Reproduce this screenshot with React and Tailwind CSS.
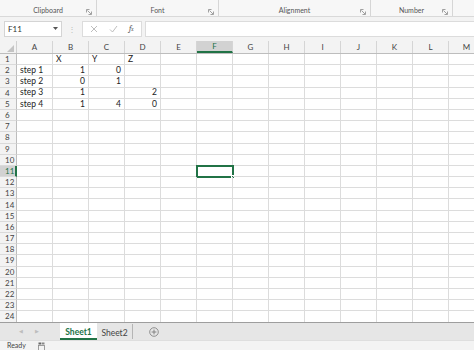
import React from 'react';

const cols = ['A', 'B', 'C', 'D', 'E', 'F', 'G', 'H', 'I', 'J', 'K', 'L', 'M'];

const data = {
    1: { B: ['X', 'l'], C: ['Y', 'l'], D: ['Z', 'l'] },
    2: { A: ['step 1', 'l'], B: ['1', 'r'], C: ['0', 'r'] },
    3: { A: ['step 2', 'l'], B: ['0', 'r'], C: ['1', 'r'] },
    4: { A: ['step 3', 'l'], B: ['1', 'r'], D: ['2', 'r'] },
    5: { A: ['step 4', 'l'], B: ['1', 'r'], C: ['4', 'r'], D: ['0', 'r'] },
};

const Launcher = () => (
    <svg width="6" height="6" viewBox="0 0 6 6" className="text-[#8a8a8a]">
        <path d="M0.5 0.5h3M0.5 0.5v3M1.5 1.5l3.5 3.5M2.5 5.5h3v-3" stroke="currentColor" strokeWidth="0.8" fill="none" />
    </svg>
);

const Group = ({ label, w }) => (
    <div className={`relative flex items-end justify-center pb-[2px] h-full border-r border-[#d6d6d6] ${w}`}>
        <span className="text-[7px] text-[#555] leading-none">{label}</span>
        <span className="absolute right-[4px] top-[9px]"><Launcher /></span>
    </div>
);

const App = () => {
    const rows = Array.from({ length: 24 }, (_, i) => i + 1);
    return (
        <div className="w-[474px] h-[350px] overflow-hidden bg-white flex flex-col" style={{ fontFamily: 'Lato, "Open Sans", sans-serif' }}>
            {/* ribbon group labels */}
            <div className="h-[17px] flex bg-[#f7f7f7] border-b border-[#d9d9d9] shrink-0">
                <Group label="Clipboard" w="w-[97px]" />
                <Group label="Font" w="w-[122px]" />
                <Group label="Alignment" w="w-[152px]" />
                <Group label="Number" w="w-[82px]" />
            </div>

            {/* formula bar */}
            <div className="h-[24px] flex items-center bg-[#f3f3f3] shrink-0 pl-[4px] pr-0">
                <div className="w-[58px] h-[16px] bg-white border border-[#d4d4d4] flex items-center justify-between px-[3px]">
                    <span className="text-[8px] text-[#333]">F11</span>
                    <svg width="5" height="4" viewBox="0 0 5 4"><path d="M0 0h5L2.5 3z" fill="#555" /></svg>
                </div>
                <div className="w-[20px] flex justify-center text-[8px] text-[#bbb] leading-none">⋮</div>
                <div className="w-[60px] h-[16px] bg-white border border-[#dcdcdc] flex items-center justify-around px-[2px]">
                    <svg width="8" height="8" viewBox="0 0 8 8"><path d="M1 1l6 6M7 1l-6 6" stroke="#b5b5b5" strokeWidth="0.9" /></svg>
                    <svg width="9" height="8" viewBox="0 0 9 8"><path d="M1 4.5l2.5 2.5L8 1" stroke="#b5b5b5" strokeWidth="0.9" fill="none" /></svg>
                    <span className="text-[8px] italic text-[#555] font-serif">f<span className="text-[5px]">x</span></span>
                </div>
                <div className="ml-[3px] flex-1 h-[16px] bg-white border border-[#dcdcdc] border-r-0" />
            </div>

            {/* grid */}
            <div className="flex-1 overflow-hidden relative">
                <div className="flex h-[13px] bg-[#f3f3f3] border-b border-[#bdbdbd]">
                    <div className="w-[17px] shrink-0 border-r border-[#d0d0d0] relative">
                        <svg width="7" height="7" viewBox="0 0 7 7" className="absolute right-[2px] bottom-[1px]"><path d="M7 0v7H0z" fill="#c4c4c4" /></svg>
                    </div>
                    {cols.map((c) => (
                        <div
                            key={c}
                            className={`w-[36px] shrink-0 flex items-center justify-center text-[8px] border-r border-[#d5d5d5] ${c === 'F' ? 'bg-[#d2d2d2] border-b-2 border-b-[#217346] text-[#217346]' : 'text-[#444]'}`}
                        >
                            {c}
                        </div>
                    ))}
                </div>
                {rows.map((r) => (
                    <div key={r} className="flex h-[11.2px]">
                        <div
                            className={`w-[17px] shrink-0 flex items-center pl-[5px] text-[8px] leading-none border-b border-[#dadada] ${r === 11 ? 'bg-[#d2d2d2] border-r-2 border-r-[#217346] text-[#217346]' : 'bg-[#f3f3f3] border-r border-r-[#bdbdbd] text-[#444]'}`}
                        >
                            {r}
                        </div>
                        {cols.map((c) => {
                            const cell = data[r] && data[r][c];
                            const sel = r === 11 && c === 'F';
                            return (
                                <div
                                    key={c}
                                    className={`w-[36px] shrink-0 relative flex items-center px-[3px] text-[8.5px] leading-none text-[#222] border-r border-b border-[#dcdcdc] ${cell && cell[1] === 'r' ? 'justify-end' : 'justify-start'}`}
                                >
                                    {cell ? cell[0] : ''}
                                    {sel && (
                                        <div className="absolute -left-[1px] -top-[1px] w-[38px] h-[13px] border-2 border-[#217346]">
                                            <div className="absolute -right-[3px] -bottom-[3px] w-[4px] h-[4px] bg-[#217346] border border-white" />
                                        </div>
                                    )}
                                </div>
                            );
                        })}
                    </div>
                ))}
            </div>

            {/* sheet tabs */}
            <div className="h-[18px] shrink-0 flex items-stretch bg-[#e6e6e6] border-t border-[#9e9e9e]">
                <div className="w-[60px] flex items-center gap-[12px] pl-[19px] text-[5px] text-[#bdbdbd]">
                    <span>◀</span>
                    <span>▶</span>
                </div>
                <div className="w-[37px] bg-white flex items-start justify-center pt-[3px] border-b-2 border-[#217346]">
                    <span className="text-[8.5px] font-bold text-[#217346]">Sheet1</span>
                </div>
                <div className="w-[36px] flex items-start justify-center pt-[3px] border-r border-[#b5b5b5] my-[1px]">
                    <span className="text-[8.5px] text-[#444]">Sheet2</span>
                </div>
                <div className="ml-[16px] flex items-center">
                    <svg width="10" height="10" viewBox="0 0 10 10">
                        <circle cx="5" cy="5" r="4.3" stroke="#7a7a7a" strokeWidth="0.8" fill="none" />
                        <path d="M5 2.6v4.8M2.6 5h4.8" stroke="#7a7a7a" strokeWidth="0.9" />
                    </svg>
                </div>
            </div>

            {/* status bar */}
            <div className="h-[10px] shrink-0 flex items-center bg-[#f3f3f3] border-t border-[#dedede] pl-[7px]">
                <span className="text-[7px] text-[#444] leading-none">Ready</span>
                <svg width="7" height="9" viewBox="0 0 7 9" className="ml-[12px] mt-[2px]">
                    <rect x="0.5" y="0.5" width="2.5" height="2" fill="#666" />
                    <rect x="3.5" y="0.5" width="3" height="2" fill="#888" />
                    <rect x="0.5" y="3.5" width="6" height="5" fill="none" stroke="#888" strokeWidth="0.8" />
                </svg>
            </div>
        </div>
    );
};

export default App;
